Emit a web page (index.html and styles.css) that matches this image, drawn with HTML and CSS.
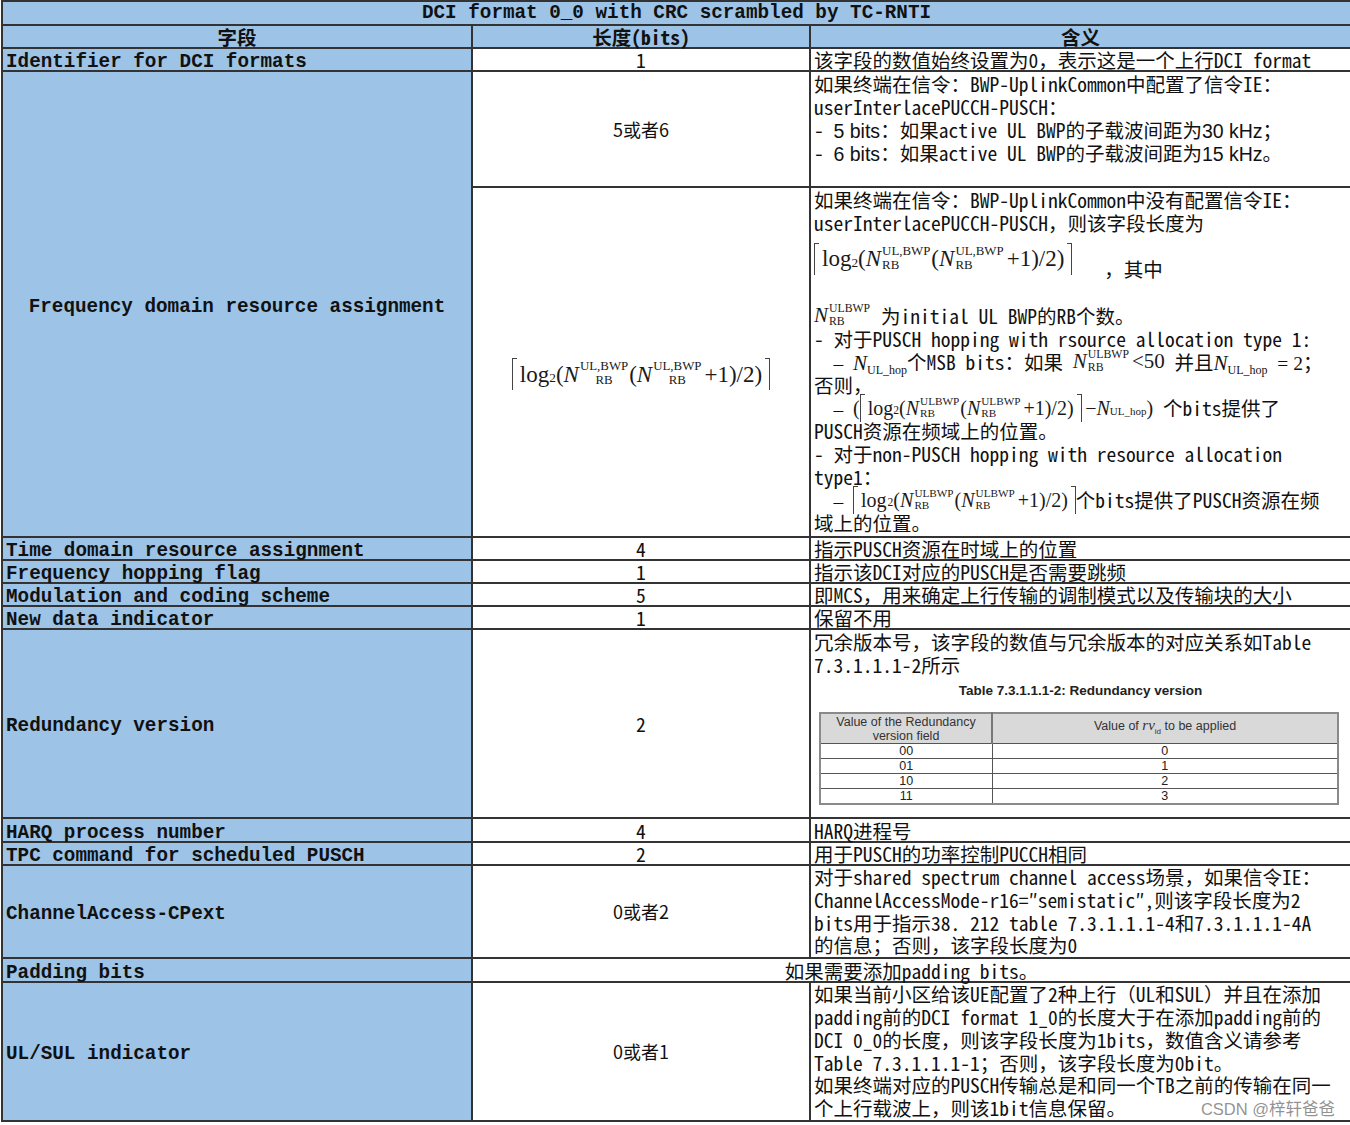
FILE: index.html
```html
<!DOCTYPE html>
<html lang="zh-CN">
<head>
<meta charset="utf-8">
<title>DCI format 0_0 with CRC scrambled by TC-RNTI</title>
<link rel="stylesheet" href="styles.css">
</head>
<body>
<div class="page">
<table class="dci">
<colgroup><col class="c1"><col class="c2"><col class="c3"></colgroup>
<tbody>
<tr class="h24"><td colspan="3" class="title">DCI format 0_0 with CRC scrambled by TC-RNTI</td></tr>
<tr class="h23 head"><td>字段</td><td>长度(bits)</td><td>含义</td></tr>
<tr class="h23"><td class="f">Identifier for DCI formats</td><td class="l">1</td><td class="d">该字段的数值始终设置为0，表示这是一个上行DCI format</td></tr>
<tr class="h116"><td class="f fc" rowspan="2">Frequency domain resource assignment</td><td class="l ys">5或者6</td><td class="d top">
<div class="ln">如果终端在信令：BWP-UplinkCommon中配置了信令IE：</div>
<div class="ln">userInterlacePUCCH-PUSCH：</div>
<div class="ln">- <span class="ar">5 bits</span>：如果active UL BWP的子载波间距为<span class="ar">30 kHz</span>；</div>
<div class="ln">- <span class="ar">6 bits</span>：如果active UL BWP的子载波间距为<span class="ar">15 kHz</span>。</div>
</td></tr>
<tr class="h350"><td class="l lowf"><span class="cf big"><span class="cl"></span><span>log</span><sub>2</sub><span>(</span><i>N</i><span class="ss"><span>UL,BWP</span><span>RB</span></span><span>(</span><i>N</i><span class="ss"><span>UL,BWP</span><span>RB</span></span><span class="pl">+1)/2)</span><span class="cr"></span></span></td><td class="d top">
<div class="ln">如果终端在信令：BWP-UplinkCommon中没有配置信令IE：</div>
<div class="ln">userInterlacePUCCH-PUSCH，则该字段长度为</div>
<div class="fl"><span class="cf big"><span class="cl"></span><span>log</span><sub>2</sub><span>(</span><i>N</i><span class="ss"><span>UL,BWP</span><span>RB</span></span><span>(</span><i>N</i><span class="ss"><span>UL,BWP</span><span>RB</span></span><span class="pl">+1)/2)</span><span class="cr"></span></span><span class="qz">，其中</span></div>
<div class="gap"></div>
<div class="ln"><span class="mf"><span class="cf mid"><i>N</i><span class="ss"><span>ULBWP</span><span>RB</span></span></span></span> 为initial UL BWP的RB个数。</div>
<div class="ln">- 对于PUSCH hopping with rsource allocation type 1:</div>
<div class="ln">&nbsp;&nbsp;<span class="sr">–</span> <span class="mi"><i>N</i><sub>UL_hop</sub></span>个MSB bits：如果 <span class="mf"><span class="cf mid"><i>N</i><span class="ss"><span>ULBWP</span><span>RB</span></span><span class="pl">&lt;50</span></span></span> 并且<span class="mi"><i>N</i><sub>UL_hop</sub></span> <span class="sr">= 2</span>；</div>
<div class="ln">否则，</div>
<div class="ln">&nbsp;&nbsp;<span class="sr">–</span> <span class="mf"><span class="cf sm"><span>(</span><span class="cl"></span><span>log</span><sub>2</sub><span>(</span><i>N</i><span class="ss"><span>ULBWP</span><span>RB</span></span><span>(</span><i>N</i><span class="ss"><span>ULBWP</span><span>RB</span></span><span class="pl">+1)/2)</span><span class="cr"></span><span class="pl">&#8202;−</span><i>N</i><sub class="hs">UL_hop</sub><span>)</span></span></span> 个bits提供了</div>
<div class="ln">PUSCH资源在频域上的位置。</div>
<div class="ln">- 对于non-PUSCH hopping with resource allocation</div>
<div class="ln">type1：</div>
<div class="ln">&nbsp;&nbsp;<span class="sr">–</span> <span class="mf"><span class="cf sm"><span class="cl"></span><span>log</span><sub>&#8202;2</sub><span>(</span><i>N</i><span class="ss"><span>ULBWP</span><span>RB</span></span><span>(</span><i>N</i><span class="ss"><span>ULBWP</span><span>RB</span></span><span class="pl">+1)/2)</span><span class="cr"></span></span></span>个bits提供了PUSCH资源在频</div>
<div class="ln">域上的位置。</div>
</td></tr>
<tr class="h23"><td class="f">Time domain resource assignment</td><td class="l">4</td><td class="d">指示PUSCH资源在时域上的位置</td></tr>
<tr class="h23"><td class="f">Frequency hopping flag</td><td class="l">1</td><td class="d">指示该DCI对应的PUSCH是否需要跳频</td></tr>
<tr class="h23"><td class="f">Modulation and coding scheme</td><td class="l">5</td><td class="d">即MCS，用来确定上行传输的调制模式以及传输块的大小</td></tr>
<tr class="h23"><td class="f">New data indicator</td><td class="l">1</td><td class="d">保留不用</td></tr>
<tr class="h189"><td class="f">Redundancy version</td><td class="l">2</td><td class="d top">
<div class="ln">冗余版本号，该字段的数值与冗余版本的对应关系如Table</div>
<div class="ln">7.3.1.1.1-2所示</div>
<div class="rvt">Table 7.3.1.1.1-2: Redundancy version</div>
<table class="rv">
<colgroup><col class="ra"><col class="rb"></colgroup>
<tbody>
<tr class="rvh"><td>Value of the Redundancy<br>version field</td><td>Value of <i class="rvi">rv</i><sub class="rvs">id</sub> to be applied</td></tr>
<tr><td>00</td><td>0</td></tr>
<tr><td>01</td><td>1</td></tr>
<tr><td>10</td><td>2</td></tr>
<tr><td>11</td><td>3</td></tr>
</tbody>
</table>
</td></tr>
<tr class="h24"><td class="f">HARQ process number</td><td class="l">4</td><td class="d">HARQ进程号</td></tr>
<tr class="h23"><td class="f">TPC command for scheduled PUSCH</td><td class="l">2</td><td class="d">用于PUSCH的功率控制PUCCH相同</td></tr>
<tr class="h93"><td class="f">ChannelAccess-CPext</td><td class="l ys">0或者2</td><td class="d tight">
<div class="ln">对于shared spectrum channel access场景，如果信令IE：</div>
<div class="ln">ChannelAccessMode-r16=″semistatic″,则该字段长度为2</div>
<div class="ln">bits用于指示38. 212 table 7.3.1.1.1-4和7.3.1.1.1-4A</div>
<div class="ln">的信息；否则，该字段长度为0</div>
</td></tr>
<tr class="h24"><td class="f">Padding bits</td><td colspan="2" class="l">如果需要添加padding bits。</td></tr>
<tr class="h139"><td class="f">UL/SUL indicator</td><td class="l ys">0或者1</td><td class="d tight">
<div class="ln">如果当前小区给该UE配置了2种上行（UL和SUL）并且在添加</div>
<div class="ln">padding前的DCI format 1_0的长度大于在添加padding前的</div>
<div class="ln">DCI 0_0的长度，则该字段长度为1bits，数值含义请参考</div>
<div class="ln">Table 7.3.1.1.1-1；否则，该字段长度为0bit。</div>
<div class="ln">如果终端对应的PUSCH传输总是和同一个TB之前的传输在同一</div>
<div class="ln">个上行载波上，则该1bit信息保留。</div>
</td></tr>
</tbody>
</table>
<div class="wm">CSDN @梓轩爸爸</div>
</div>
</body>
</html>
```

FILE: styles.css
```css
html, body {
  margin: 0;
  padding: 0;
  background: #ffffff;
}
body {
  font-family: "Noto Sans Mono CJK SC", "Liberation Mono", "Noto Sans CJK SC", monospace;
  color: #111;
}
.page {
  position: relative;
  width: 1350px;
  height: 1125px;
  overflow: hidden;
}
.dci {
  border-collapse: collapse;
  table-layout: fixed;
  width: 1349px;
  margin-left: 1px;
}
.c1 { width: 470px; }
.c2 { width: 338px; }
.c3 { width: 541px; }
.dci > tbody > tr > td {
  border: 2px solid #333;
  padding: 0 3px;
  white-space: nowrap;
  font-size: 19.5px;
  line-height: 21px;
  vertical-align: middle;
}
.h23 { height: 23px; }
.h24 { height: 24px; }
.h93 { height: 93px; }
.h116 { height: 116px; }
.h139 { height: 139px; }
.h189 { height: 189px; }
.h350 { height: 350px; }

.dci > tbody > tr > td.title {
  background: #9dc3e6;
  text-align: center;
  font-family: "Liberation Mono", monospace;
  font-weight: bold;
  font-size: 19.3px;
}
.head > td {
  background: #9dc3e6;
  text-align: center;
  font-weight: bold;
}
.dci > tbody > tr > td.f {
  background: #9dc3e6;
  font-family: "Liberation Mono", monospace;
  font-weight: bold;
  font-size: 19.3px;
  padding-left: 3px;
  padding-top: 6px;
  line-height: 15px;
}
.dci > tbody > tr > td.fc { text-align: center; }
.l { text-align: center; }
.dci > tbody > tr > td.lowf { padding-top: 26px; }
.dci > tbody > tr > td.ys {
  font-family: "Noto Sans CJK SC", sans-serif;
  font-size: 18px;
}
.dci > tbody > tr > td.top {
  vertical-align: top;
  padding-top: 0;
}
.ln {
  height: 23px;
  line-height: 23px;
  white-space: nowrap;
}
.tight .ln {
  height: 22.7px;
  line-height: 22.7px;
}
.ar { font-family: "Liberation Sans", sans-serif; }
.sr { font-family: "Liberation Serif", serif; }
.fl {
  height: 49px;
  display: flex;
  align-items: center;
}
.qz {
  margin-left: 32px;
  margin-top: 20px;
}
.gap { height: 21px; }

/* math */
.cf {
  display: inline-flex;
  align-items: center;
  font-family: "Liberation Serif", serif;
  color: #1a1a1a;
  white-space: nowrap;
}
.cf.big { font-size: 23px; line-height: 23px; }
.cf.mid { font-size: 21px; line-height: 21px; }
.cf.sm { font-size: 20px; line-height: 20px; }
.cf sub {
  font-size: 0.58em;
  line-height: 1;
  position: relative;
  top: 0.3em;
  vertical-align: baseline;
}
.cf sub.hs { font-size: 0.55em; top: 0.35em; }
.ss {
  display: inline-flex;
  flex-direction: column;
  font-size: 0.56em;
  line-height: 1.05;
  margin: 0 1px 0 1px;
}
.pl { margin-left: 2px; }
.cl, .cr {
  box-sizing: border-box;
  width: 5px;
  border-top: 1px solid #444;
}
.big .cl, .big .cr { height: 32px; }
.sm .cl, .sm .cr { height: 28px; }
.cl { border-left: 1px solid #444; margin-right: 3px; }
.cr { border-right: 1px solid #444; margin-left: 3px; }
.mf {
  display: inline-flex;
  align-items: center;
  height: 23px;
  vertical-align: top;
}
.mi {
  font-family: "Liberation Serif", serif;
  font-size: 21px;
  line-height: 0;
}
.mi sub {
  font-size: 12px;
  line-height: 0;
  vertical-align: -4px;
}

/* redundancy sub-table */
.rvt {
  height: 30px;
  line-height: 30px;
  text-align: center;
  font-family: "Liberation Sans", Arial, sans-serif;
  font-weight: bold;
  font-size: 13.5px;
  color: #222;
}
.rv {
  border-collapse: collapse;
  table-layout: fixed;
  width: 518px;
  margin: 6px 0 0 5px;
  border: 2px solid #8a8a8a;
  font-family: "Liberation Sans", Arial, sans-serif;
  font-size: 12.5px;
  color: #222;
}
.ra { width: 172px; }
.rb { width: 346px; }
.rv td {
  border: 1px solid #555;
  text-align: center;
  padding: 0;
  height: 14px;
  line-height: 13px;
}
.rv .rvh td {
  background: #d9d9d9;
  height: 29px;
  line-height: 14px;
  color: #333;
}
.rv .rvh td:first-child { border-right: 2px solid #777; }
.rvi { font-family: "Liberation Serif", serif; font-size: 15px; }
.rvs { font-size: 8px; }

.wm {
  position: absolute;
  right: 15px;
  top: 1096px;
  font-family: "Liberation Sans", "Noto Sans CJK SC", sans-serif;
  font-size: 16.5px;
  color: rgba(110, 110, 110, 0.75);
}
```
